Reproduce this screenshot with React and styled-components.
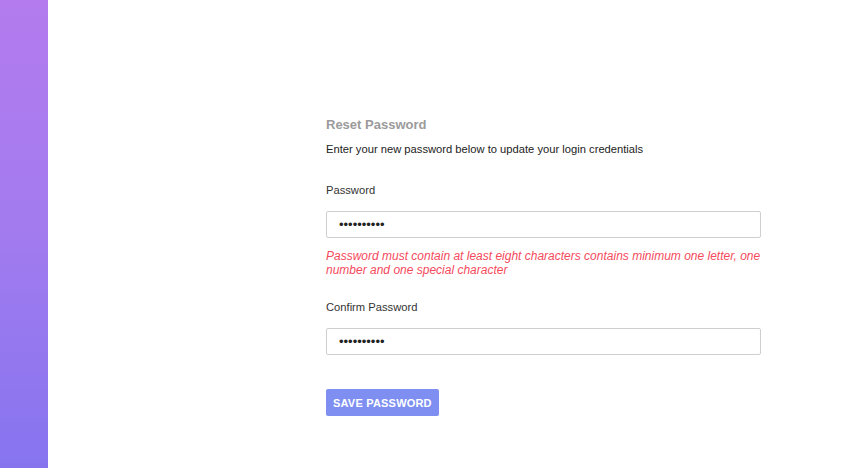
import React from 'react';
import styled, { createGlobalStyle } from 'styled-components';

const GlobalStyle = createGlobalStyle`
  html, body {
    margin: 0;
    padding: 0;
    height: 100%;
    background: #fff;
    font-family: 'Liberation Sans', Arial, sans-serif;
  }
  #root { height: 100%; }
`;

const Page = styled.div`
  display: flex;
  height: 468px;
`;

const Sidebar = styled.aside`
  width: 48px;
  flex-shrink: 0;
  background: linear-gradient(180deg, #b37bee 0%, #a27bef 50%, #8674ef 100%);
`;

const Main = styled.main`
  flex: 1;
  padding: 117px 0 0 278px;
`;

const Form = styled.form`
  width: 435px;
  display: flex;
  flex-direction: column;
`;

const Title = styled.h2`
  margin: 0;
  font-size: 13px;
  line-height: 16px;
  font-weight: bold;
  color: #9b9b9b;
`;

const Subtitle = styled.p`
  margin: 9px 0 0;
  font-size: 11.2px;
  line-height: 14px;
  color: #222;
`;

const Field = styled.div`
  display: flex;
  flex-direction: column;
  margin-top: ${p => p.$top}px;
`;

const Label = styled.label`
  font-size: 11.2px;
  line-height: 14px;
  color: #333;
  margin-bottom: 14px;
`;

const Input = styled.input`
  box-sizing: border-box;
  width: 100%;
  height: 27px;
  border: 1px solid #cfcfcf;
  border-radius: 2px;
  padding: 0 12px;
  font-family: 'Liberation Sans', Arial, sans-serif;
  font-size: 13px;
  color: #222;
  outline: none;
`;

const Error = styled.p`
  margin: 11px 0 0;
  font-size: 12px;
  line-height: 14px;
  font-style: italic;
  color: #f54a5c;
`;

const Button = styled.button`
  align-self: flex-start;
  margin-top: 34px;
  height: 27px;
  padding: 0 7px;
  border: none;
  border-radius: 2px;
  background: #7e8ff1;
  color: #fff;
  font-family: 'Liberation Sans', Arial, sans-serif;
  font-size: 11px;
  font-weight: bold;
  text-transform: uppercase;
  letter-spacing: 0.2px;
  cursor: pointer;
`;

function App() {
  return (
    <Page>
      <GlobalStyle />
      <Sidebar />
      <Main>
        <Form onSubmit={e => e.preventDefault()}>
          <Title>Reset Password</Title>
          <Subtitle>Enter your new password below to update your login credentials</Subtitle>
          <Field $top={27}>
            <Label htmlFor="password">Password</Label>
            <Input id="password" type="password" defaultValue="1234567890" />
          </Field>
          <Error>
            Password must contain at least eight characters contains minimum one letter, one number and one special character
          </Error>
          <Field $top={23}>
            <Label htmlFor="confirm">Confirm Password</Label>
            <Input id="confirm" type="password" defaultValue="1234567890" />
          </Field>
          <Button type="submit">Save Password</Button>
        </Form>
      </Main>
    </Page>
  );
}

export default App;
